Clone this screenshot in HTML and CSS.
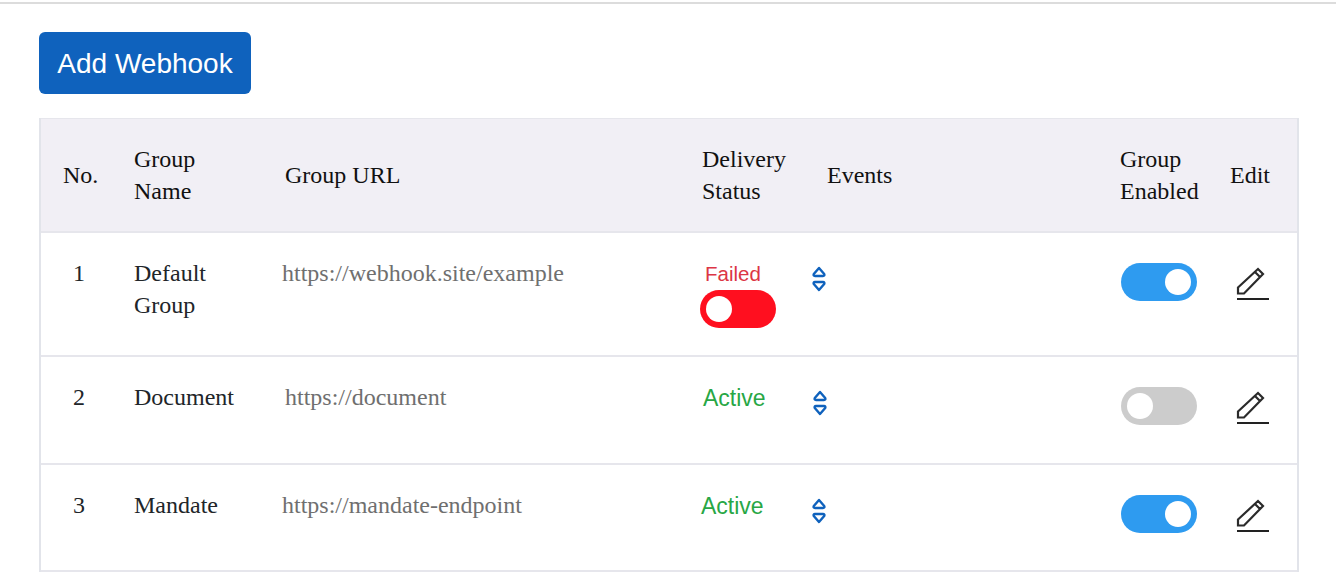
FILE: index.html
```html
<!DOCTYPE html>
<html lang="en">
<head>
<meta charset="utf-8">
<title>Webhooks</title>
<link rel="stylesheet" href="styles.css">
</head>
<body>
<main class="page">
  <button class="add-btn" type="button">Add Webhook</button>
  <table class="hooks">
    <colgroup>
      <col class="c-no"><col class="c-name"><col class="c-url"><col class="c-status"><col class="c-events"><col class="c-enabled"><col class="c-edit">
    </colgroup>
    <thead>
      <tr>
        <th class="no-head">No.</th>
        <th>Group<br>Name</th>
        <th>Group URL</th>
        <th>Delivery Status</th>
        <th>Events</th>
        <th>Group Enabled</th>
        <th>Edit</th>
      </tr>
    </thead>
    <tbody>
      <tr class="r1">
        <td class="num">1</td>
        <td>Default Group</td>
        <td class="url url-in">https://webhook.site/example</td>
        <td>
          <div class="failed">Failed</div>
          <span class="toggle off red"><i></i></span>
        </td>
        <td><svg class="sort" width="14" height="26" viewBox="0 0 14 26"><path d="M7 2 L12.200 8 Q13 10 11 10 H3 Q1 10 1.800 8 Z M3 16 H11 Q13 16 12.200 18 L7 24 L1.800 18 Q1 16 3 16 Z" fill="none" stroke="#0f62bd" stroke-width="2.400" stroke-linejoin="round"/></svg></td>
        <td><span class="toggle on"><i></i></span></td>
        <td><svg class="pencil" width="34" height="34" viewBox="0 0 34 34"><path d="M2 20.500 L22 2 L27 7 L8 26.500 H2 Z M19 5 L24 10" fill="none" stroke="#2b2b2b" stroke-width="2.200"/><path d="M1 32 H33" stroke="#222" stroke-width="2"/></svg></td>
      </tr>
      <tr class="r2">
        <td class="num">2</td>
        <td>Document</td>
        <td class="url">https://document</td>
        <td><div class="active">Active</div></td>
        <td><svg class="sort sort-in" width="14" height="26" viewBox="0 0 14 26"><path d="M7 2 L12.200 8 Q13 10 11 10 H3 Q1 10 1.800 8 Z M3 16 H11 Q13 16 12.200 18 L7 24 L1.800 18 Q1 16 3 16 Z" fill="none" stroke="#0f62bd" stroke-width="2.400" stroke-linejoin="round"/></svg></td>
        <td><span class="toggle off"><i></i></span></td>
        <td><svg class="pencil" width="34" height="34" viewBox="0 0 34 34"><path d="M2 20.500 L22 2 L27 7 L8 26.500 H2 Z M19 5 L24 10" fill="none" stroke="#2b2b2b" stroke-width="2.200"/><path d="M1 32 H33" stroke="#222" stroke-width="2"/></svg></td>
      </tr>
      <tr class="r3">
        <td class="num">3</td>
        <td>Mandate</td>
        <td class="url url-in">https://mandate-endpoint</td>
        <td><div class="active active-in">Active</div></td>
        <td><svg class="sort" width="14" height="26" viewBox="0 0 14 26"><path d="M7 2 L12.200 8 Q13 10 11 10 H3 Q1 10 1.800 8 Z M3 16 H11 Q13 16 12.200 18 L7 24 L1.800 18 Q1 16 3 16 Z" fill="none" stroke="#0f62bd" stroke-width="2.400" stroke-linejoin="round"/></svg></td>
        <td><span class="toggle on"><i></i></span></td>
        <td><svg class="pencil" width="34" height="34" viewBox="0 0 34 34"><path d="M2 20.500 L22 2 L27 7 L8 26.500 H2 Z M19 5 L24 10" fill="none" stroke="#2b2b2b" stroke-width="2.200"/><path d="M1 32 H33" stroke="#222" stroke-width="2"/></svg></td>
      </tr>
    </tbody>
  </table>
</main>
</body>
</html>
```
FILE: styles.css
```css
html, body { margin: 0; padding: 0; background: #fff; height: 572px; overflow: hidden; }
.page { margin-top: 2px; border-top: 2px solid #dcdcdc; padding: 28px 37px 0 39px; font-family: "Liberation Serif", serif; color: #212529; }
.add-btn { display: block; width: 212px; height: 62px; background: #0f62bd; color: #fff; border: 0; border-radius: 6px; font-family: "Liberation Sans", sans-serif; font-size: 28px; padding: 1px 0 0; }
.hooks { margin-top: 24px; width: 1260px; table-layout: fixed; border-collapse: separate; border-spacing: 0; border-left: 2px solid #e2e4ea; border-right: 2px solid #e2e4ea; font-size: 24px; line-height: 32px; }
.c-no { width: 81px; }
.c-name { width: 151px; }
.c-url { width: 417px; }
.c-status { width: 125px; }
.c-events { width: 293px; }
.c-enabled { width: 110px; }
.c-edit { width: 79px; }
th { background: #f1eff5; font-weight: 400; text-align: left; height: 115px; padding: 0 12px; border-top: 1px solid #e6e6ec; border-bottom: 2px solid #e6e6ec; color: #111; box-sizing: border-box; }
th.no-head { padding-left: 22px; }
td { vertical-align: top; padding: 24px 12px 0; border-bottom: 2px solid #e6e6ec; box-sizing: border-box; }
.r1 td { height: 124px; }
.r2 td { height: 108px; }
.r3 td { height: 107px; }
.num { text-align: center; padding-left: 12px; padding-right: 17px; }
.url { color: #6f6f6f; }
.url-in { padding-left: 9px; }
.failed { color: #dc3545; font-family: "Liberation Sans", sans-serif; font-size: 20.500px; line-height: 32px; padding: 1px 0 0 3px; }
.active { color: #28a745; font-family: "Liberation Sans", sans-serif; font-size: 23px; line-height: 32px; padding: 1px 0 0 1px; }
.active-in { padding-left: 0; margin-left: -1px; }
.toggle { display: flex; align-items: center; width: 76px; height: 38px; border-radius: 19px; padding: 0 6px; box-sizing: border-box; margin-top: 6px; }
.toggle i { display: block; width: 26px; height: 26px; border-radius: 50%; background: #fff; }
.toggle.on { background: #2e9bf0; justify-content: flex-end; margin-left: 1px; }
.toggle.off { background: #ccc; margin-left: 1px; }
.toggle.red { background: #ff0f1f; margin: 0 0 0 -2px; }
.sort { display: block; margin: 9px 0 0 -15px; }
.sort-in { margin-left: -14px; }
.pencil { display: block; margin: 10px 0 0 6px; }
```
